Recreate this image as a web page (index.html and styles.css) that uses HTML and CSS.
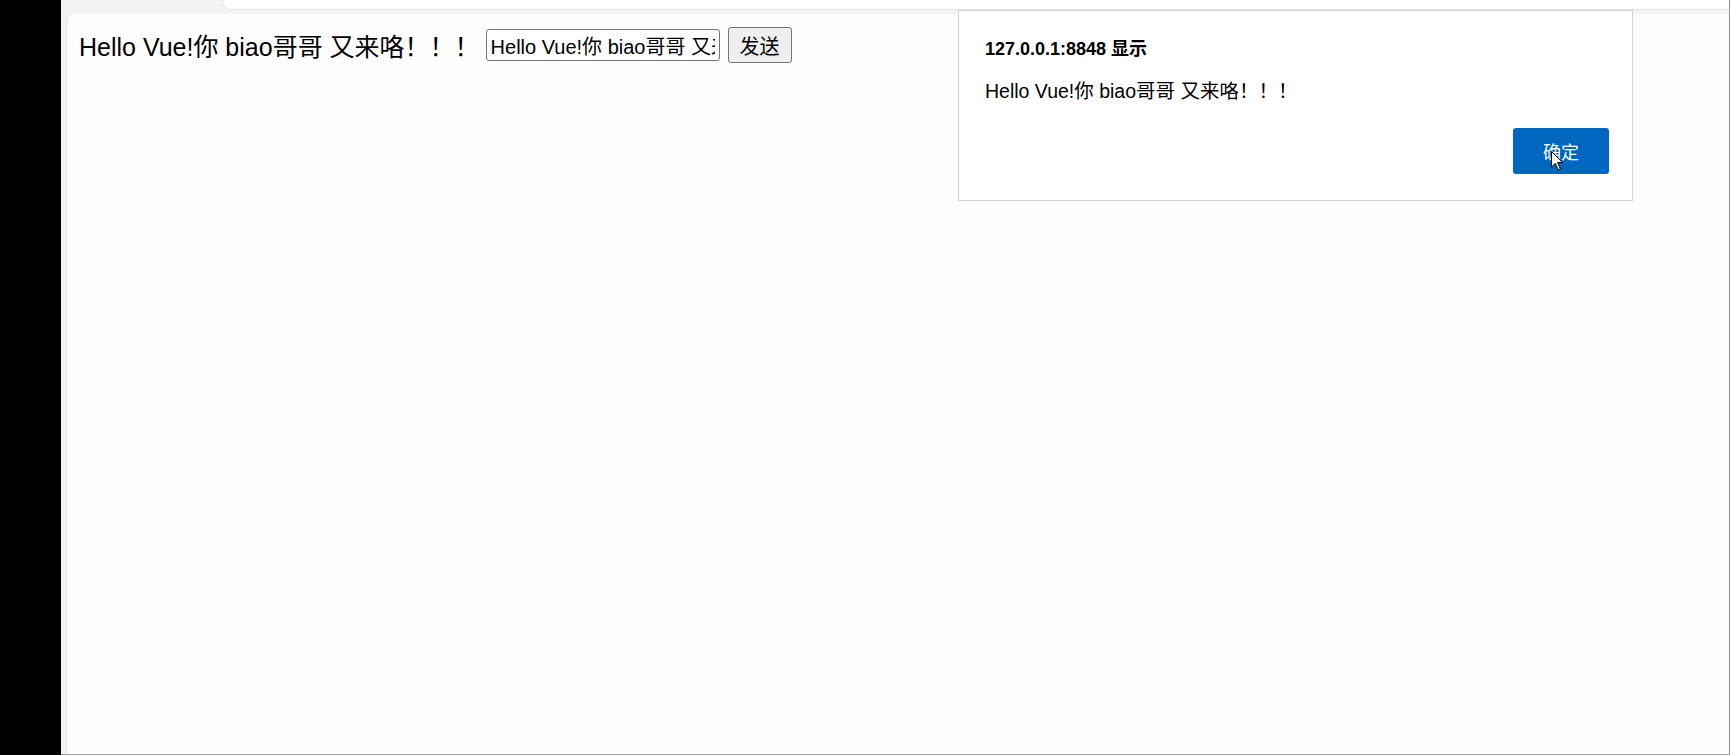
FILE: index.html
```html
<!DOCTYPE html>
<html>
<head>
    <meta charset="utf-8">
    <link rel="stylesheet" href="styles.css">
</head>
<body>

    <div class="screen">

        <!-- dark strip on the left of the window -->
        <div class="side"></div>

        <div class="browser">
            <div class="tabstrip">
                <div class="tab"></div>
            </div>
            <div class="viewport">
                <div id="app">
                    <span class="msg">Hello Vue!你 biao哥哥 又来咯！！！</span>
                    <input type="text" class="msg-input" value="Hello Vue!你 biao哥哥 又来咯！！！">
                    <button class="send">发送</button>
                </div>
            </div>
        </div>

        <!-- alert() box -->
        <div class="alert">
            <div class="alert-title">127.0.0.1:8848 显示</div>
            <div class="alert-text">Hello Vue!你 biao哥哥 又来咯！！！</div>
            <div class="alert-actions">
                <button class="alert-ok">确定</button>
            </div>
        </div>

        <svg class="cursor" width="13" height="20" viewBox="0 0 13 20">
            <path d="M0.5 0.5 L0.5 16 L4.3 12.4 L7.2 18.8 L9.4 17.8 L6.6 11.6 L11.6 11.6 Z" fill="#fff" stroke="#000" stroke-width="1" stroke-linejoin="miter"/>
        </svg>
    </div>

</body>
</html>
```

FILE: styles.css
```css
html, body {
    margin: 0;
    padding: 0;
    background: #000;
}

.screen {
    position: relative;
    display: flex;
    width: 1730px;
    height: 755px;
    overflow: hidden;
    font-family: "Liberation Sans", "Noto Sans CJK SC", sans-serif;
}

.side {
    width: 61px;
    background: #000;
}

.browser {
    flex: 1;
    display: flex;
    flex-direction: column;
    background: #f3f3f3;
    border-right: 1px solid #8c8c8c;
    border-bottom: 1px solid #a0a0a0;
}

/* top strip */
.tabstrip {
    height: 14px;
    display: flex;
}

.tab {
    flex: 1;
    height: 9px;
    margin-left: 161px;
    background: #fff;
    border-left: 1px solid #e4e4e4;
    border-bottom: 1px solid #e4e4e4;
    border-bottom-left-radius: 8px;
}

.viewport {
    flex: 1;
    margin-left: 5px;
    background: #fefefe;
    border-left: 1px solid #e2e2e2;
    border-top-left-radius: 8px;
}

#app {
    display: flex;
    align-items: center;
    padding: 13px 12px 0 12px;
    height: 36px;
}

.msg {
    font-size: 25px;
    color: #000;
    margin-right: 6px;
    white-space: nowrap;
}

.msg-input {
    box-sizing: border-box;
    width: 234px;
    height: 32px;
    padding: 0 4px;
    margin: 0 8px 0 0;
    border: 1px solid #767676;
    border-radius: 3px;
    font-family: "Liberation Sans", "Noto Sans CJK SC", sans-serif;
    font-size: 20px;
    color: #000;
    background: #fff;
}

.send {
    box-sizing: border-box;
    width: 64px;
    height: 36px;
    padding: 0;
    margin: 0;
    border: 1px solid #767676;
    border-radius: 3px;
    background: #efefef;
    font-family: "Liberation Sans", "Noto Sans CJK SC", sans-serif;
    font-size: 20px;
    color: #000;
}

/* alert dialog */
.alert {
    position: absolute;
    left: 958px;
    top: 10px;
    box-sizing: border-box;
    width: 675px;
    height: 191px;
    padding: 26px 23px 0 26px;
    background: #fff;
    border: 1px solid #d4d4d4;
    color: #000;
}

.alert-title {
    font-size: 18px;
    font-weight: bold;
    line-height: 24px;
}

.alert-text {
    margin-top: 18px;
    font-size: 19.5px;
    line-height: 24px;
}

.alert-actions {
    display: flex;
    justify-content: flex-end;
    margin-top: 25px;
}

.alert-ok {
    width: 96px;
    height: 46px;
    padding: 0;
    border: none;
    border-radius: 3px;
    background: #0067c0;
    color: #fff;
    font-family: "Liberation Sans", "Noto Sans CJK SC", sans-serif;
    font-size: 18px;
}

.cursor {
    position: absolute;
    left: 1551px;
    top: 151px;
}
```
